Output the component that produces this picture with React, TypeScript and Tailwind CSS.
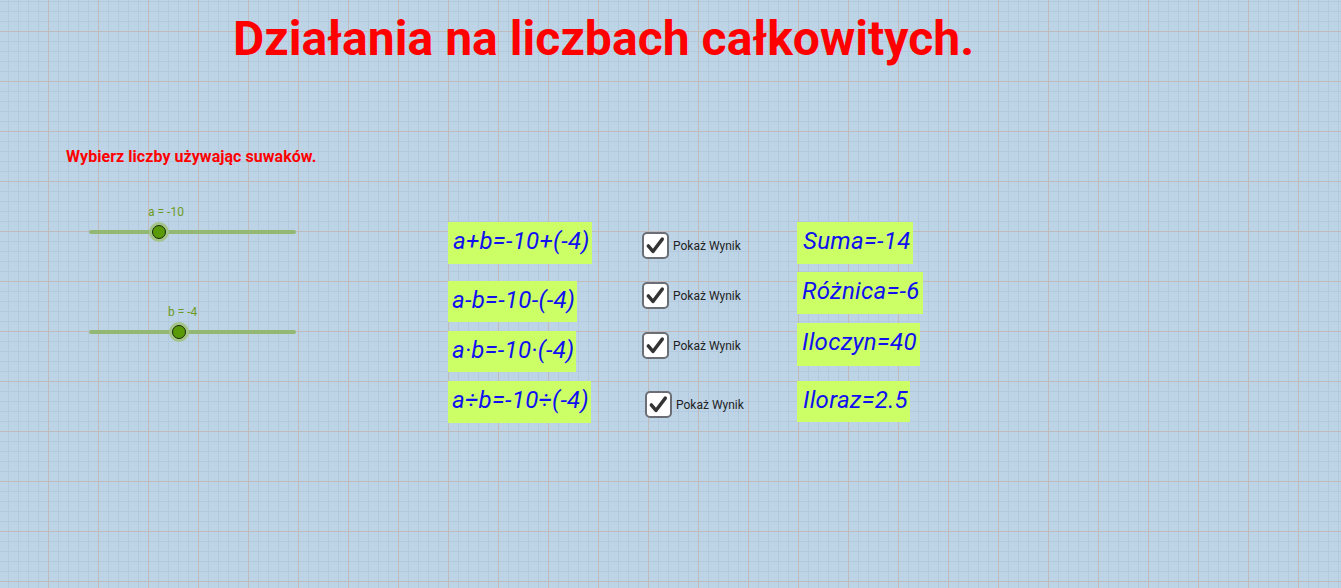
import { useState } from "react";

type SliderProps = { name: string; value: number; knob: number };

// Horizontal GeoGebra-style slider, knob position is given in px from the left end
function Slider({ name, value, knob }: SliderProps) {
  return (
    <div className="relative h-[100px] w-[207px]">
      <div
        className="absolute top-[5px] text-[12px] leading-[14px] text-[#6f9a1c]"
        style={{ left: knob - 11 }}
      >
        {name} = {value}
      </div>
      <div className="absolute left-0 right-0 top-[30px] h-[4px] rounded-full bg-[#93b874]" />
      <div
        className="absolute top-[22px] flex h-[20px] w-[20px] items-center justify-center rounded-full bg-[#a5c489]"
        style={{ left: knob - 10 }}
      >
        <div className="h-[14px] w-[14px] rounded-full border border-[#15290a] bg-[#5a9a08]" />
      </div>
    </div>
  );
}

function Check({ checked, onToggle }: { checked: boolean; onToggle: () => void }) {
  return (
    <button
      onClick={onToggle}
      className="flex h-[27px] w-[27px] items-center justify-center rounded-[5px] border-2 border-[#6b6f75] bg-white"
    >
      {checked && (
        <svg width="27" height="27" viewBox="0 0 27 27">
          <path
            d="M5 14 L10.5 20.5 L21.5 6"
            fill="none"
            stroke="#333"
            strokeWidth="4"
            strokeLinecap="round"
            strokeLinejoin="round"
          />
        </svg>
      )}
    </button>
  );
}

const a = -10;
const b = -4;

export default function App() {
  const [shown, setShown] = useState([true, true, true, true]);
  const toggle = (i: number) => setShown(s => s.map((v, j) => (j === i ? !v : v)));

  return (
    <div className="relative h-[588px] w-[1341px] overflow-hidden bg-[#bdd4e7] bg-[linear-gradient(to_right,#c1babb_1px,transparent_1px),linear-gradient(to_bottom,#c1babb_1px,transparent_1px),linear-gradient(to_right,#b3cade_1px,transparent_1px),linear-gradient(to_bottom,#b3cade_1px,transparent_1px)] bg-size-[50px_50px,50px_50px,10px_10px,10px_10px] bg-position-[48px_31px,48px_31px,8px_1px,8px_1px] font-[Roboto,sans-serif]">
      {/* Title */}
      <h1 className="pl-[233px] pt-[8px] text-[48px] font-bold leading-[62px] tracking-[0.05px] text-[#ff0000]">
        Działania na liczbach całkowitych.
      </h1>
      <p className="mt-[77px] pl-[66px] text-[16px] font-bold leading-[20px] tracking-[0.05px] text-[#ff0000]">
        Wybierz liczby używając suwaków.
      </p>

      <div className="mt-[33px] flex items-start">
        {/* sliders */}
        <div className="ml-[89px] flex flex-col">
          <Slider name="a" value={a} knob={70} />
          <Slider name="b" value={b} knob={90} />
        </div>

        {/* expressions */}
        <div className="ml-[152px] flex flex-col text-[24px] italic leading-[28px] tracking-[0.3px] text-[#1010f0]">
          <div className="mt-[22px] h-[42px] w-[144px] bg-[#ccff66] pl-[5px] pt-[5px]">a+b=-10+(-4)</div>
          <div className="mt-[17px] h-[41px] w-[129px] bg-[#ccff66] pl-[4px] pt-[5px]">a-b=-10-(-4)</div>
          <div className="mt-[9px] h-[41px] w-[128px] bg-[#ccff66] pl-[4px] pt-[5px]">a·b=-10·(-4)</div>
          <div className="mt-[9px] h-[42px] w-[143px] bg-[#ccff66] pl-[4px] pt-[5px]">a÷b=-10÷(-4)</div>
        </div>

        {/* show-result toggles */}
        <div className="ml-[50px] flex w-[155px] flex-col text-[12px] text-[#222]">
          <label className="mt-[32px] flex items-center gap-[4px]">
            <Check checked={shown[0]} onToggle={() => toggle(0)} />
            Pokaż Wynik
          </label>
          <label className="mt-[23px] flex items-center gap-[4px]">
            <Check checked={shown[1]} onToggle={() => toggle(1)} />
            Pokaż Wynik
          </label>
          <label className="mt-[23px] flex items-center gap-[4px]">
            <Check checked={shown[2]} onToggle={() => toggle(2)} />
            Pokaż Wynik
          </label>
          <label className="ml-[3px] mt-[32px] flex items-center gap-[4px]">
            <Check checked={shown[3]} onToggle={() => toggle(3)} />
            Pokaż Wynik
          </label>
        </div>

        {/* results */}
        <div className="flex flex-col text-[24px] italic leading-[28px] tracking-[0.3px] text-[#1010f0]">
          <div className={`mt-[22px] h-[42px] w-[116px] bg-[#ccff66] pl-[6px] pt-[5px] ${shown[0] ? "" : "invisible"}`}>
            Suma={a + b}
          </div>
          <div className={`mt-[8px] h-[42px] w-[126px] bg-[#ccff66] pl-[5px] pt-[5px] ${shown[1] ? "" : "invisible"}`}>
            Różnica={a - b}
          </div>
          <div className={`mt-[9px] h-[43px] w-[123px] bg-[#ccff66] pl-[5px] pt-[5px] ${shown[2] ? "" : "invisible"}`}>
            Iloczyn={a * b}
          </div>
          <div className={`mt-[15px] h-[41px] w-[113px] bg-[#ccff66] pl-[6px] pt-[5px] ${shown[3] ? "" : "invisible"}`}>
            Iloraz={a / b}
          </div>
        </div>
      </div>
    </div>
  );
}
